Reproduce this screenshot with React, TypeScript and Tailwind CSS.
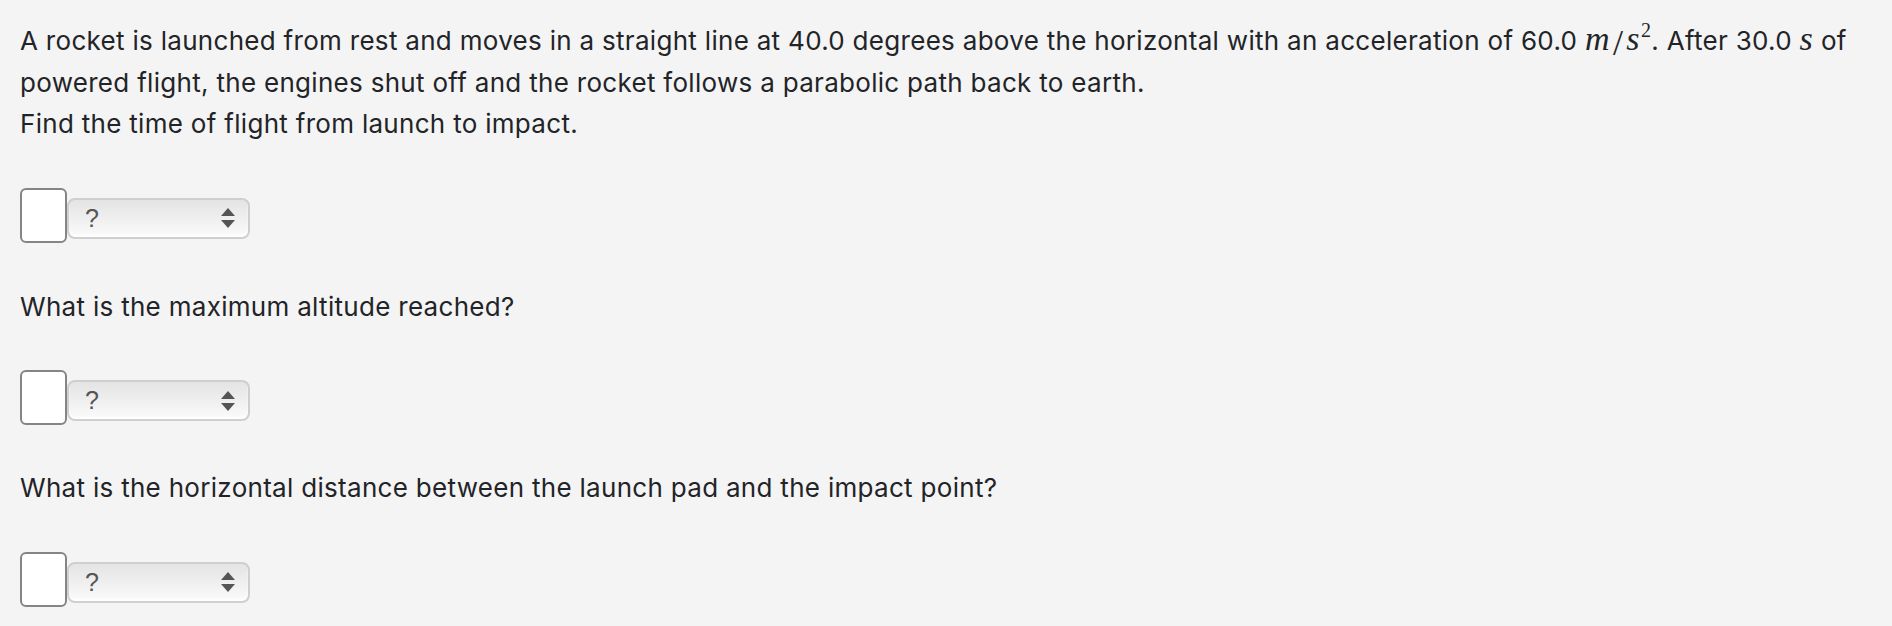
import React from "react";

const serif = '"Liberation Serif", "DejaVu Serif", serif';

const M = ({ children }: { children: React.ReactNode }) => (
  <span className="italic text-[34px] leading-none tracking-[0.5px]" style={{ fontFamily: serif }}>
    {children}
  </span>
);

function AnswerRow() {
  return (
    <div className="flex items-start">
      <div className="w-[47px] h-[55px] bg-white border-2 border-[#858585] rounded-[6px] shrink-0" />
      <div className="mt-[10px] w-[183px] h-[41px] rounded-[8px] border-2 border-[#cfcfcf] bg-gradient-to-b from-[#e4e4e4] via-[#efefef] to-[#fbfbfb] shadow-[inset_0_-2px_2px_rgba(255,255,255,0.9)] flex items-center justify-between pl-[16px] pr-[12px]">
        <span className="text-[25px] text-[#555] leading-none tracking-normal" style={{ fontFamily: '"Liberation Sans", Arial, sans-serif' }}>?</span>
        <svg width="16" height="24" viewBox="0 0 16 24" className="fill-[#555]">
          <polygon points="8,2 15,10 1,10" />
          <polygon points="1,14 15,14 8,22" />
        </svg>
      </div>
    </div>
  );
}

export default function App() {
  return (
    <div
      className="w-[1892px] h-[626px] bg-[#f4f4f4] text-[#222428] pl-[20px] pt-[20px] text-[26px] tracking-[0.3px] leading-[41.5px] overflow-hidden"
      style={{ fontFamily: 'Inter, "Noto Sans", sans-serif' }}
    >
      <p className="w-[1860px]">
        A rocket is launched from rest and moves in a straight line at 40.0 degrees above the horizontal with an acceleration of 60.0{" "}
        <M>m</M>
        <span className="inline-block text-[36px] leading-none align-[-5px] px-[3px]" style={{ fontFamily: serif }}>/</span>
        <M>s</M>
        <span className="text-[20px] leading-none align-[13px] pl-[1px]" style={{ fontFamily: serif }}>2</span>. After 30.0 <M>s</M> of powered flight, the engines shut off and the rocket follows a parabolic path back to earth.
        <br />
        Find the time of flight from launch to impact.
      </p>
      <div className="mt-[43px]">
        <AnswerRow />
      </div>
      <p className="mt-[43px]">What is the maximum altitude reached?</p>
      <div className="mt-[43px]">
        <AnswerRow />
      </div>
      <p className="mt-[42px]">What is the horizontal distance between the launch pad and the impact point?</p>
      <div className="mt-[43px]">
        <AnswerRow />
      </div>
    </div>
  );
}
